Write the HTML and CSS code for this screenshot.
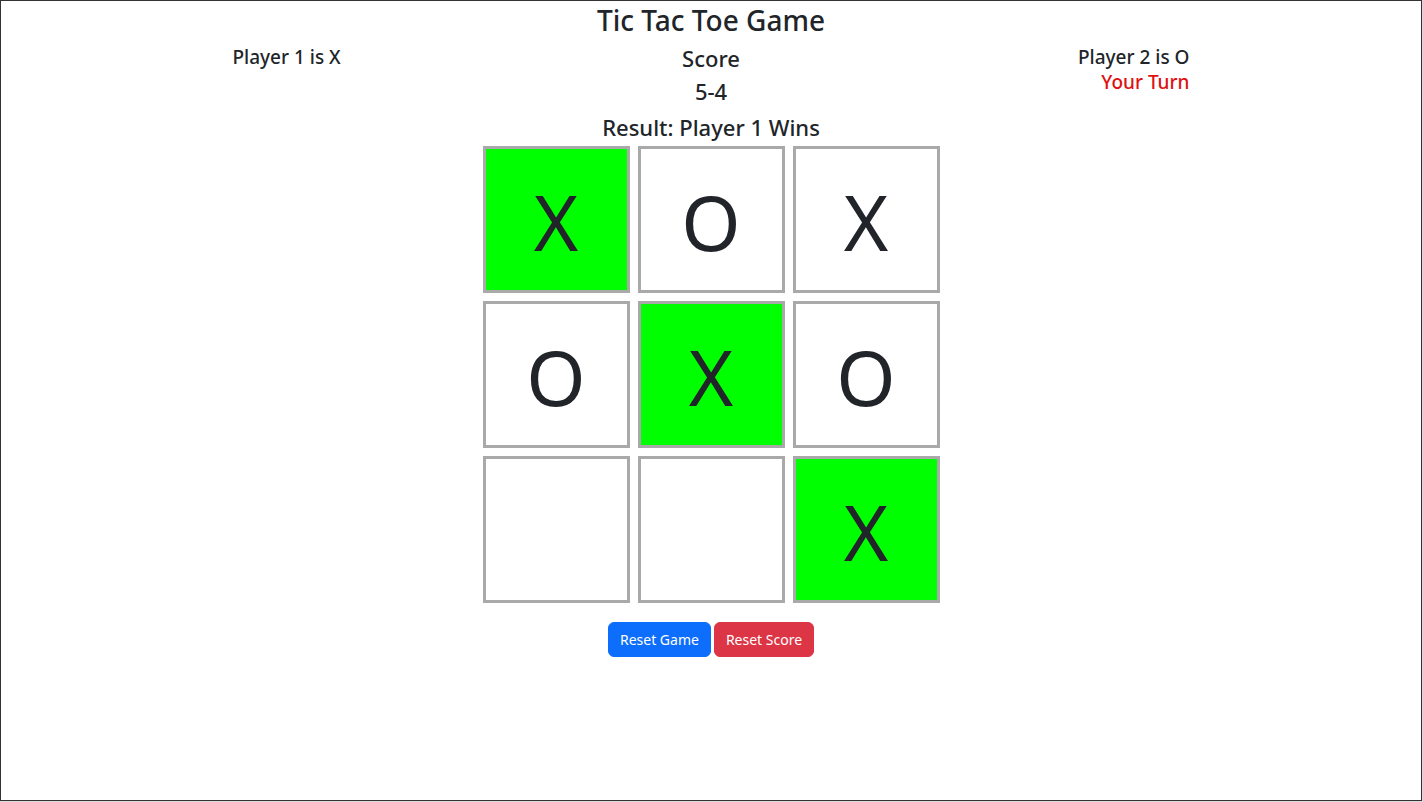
FILE: index.html
```html
<!DOCTYPE html>
<html lang="en">
<head>
<meta charset="utf-8">
<title>Tic Tac Toe Game</title>
<link rel="stylesheet" href="styles.css">
</head>
<body>
<div class="page">
  <h1 class="title">Tic Tac Toe Game</h1>
  <div class="info">
    <div class="player player-left">
      <h5 class="player-name">Player 1 is X</h5>
    </div>
    <div class="score">
      <h4 class="score-line">Score</h4>
      <h4 class="score-line tally">5-4</h4>
      <h4 class="score-line result">Result: Player 1 Wins</h4>
    </div>
    <div class="player player-right">
      <h5 class="player-name">Player 2 is O</h5>
      <h5 class="turn">Your Turn</h5>
    </div>
  </div>
  <div class="board">
    <div class="cell win">X</div>
    <div class="cell">O</div>
    <div class="cell">X</div>
    <div class="cell">O</div>
    <div class="cell win">X</div>
    <div class="cell">O</div>
    <div class="cell"></div>
    <div class="cell"></div>
    <div class="cell win">X</div>
  </div>
  <div class="actions">
    <button class="btn btn-primary">Reset Game</button>
    <button class="btn btn-danger">Reset Score</button>
  </div>
</div>
</body>
</html>
```
FILE: styles.css
```css
* { box-sizing: border-box; }
html, body {
  margin: 0;
  padding: 0;
  background: #d9d9d9;
}
body {
  font-family: "Noto Sans", "Open Sans", sans-serif;
  color: #212529;
}
.page {
  width: 1422px;
  height: 801px;
  border: 1px solid #333;
  background: #fff;
  display: flex;
  flex-direction: column;
  align-items: center;
}
.title {
  margin: 3px 0 0;
  font-size: 28px;
  font-weight: 500;
  line-height: 1.2;
  text-align: center;
}
.info {
  width: 957px;
  display: grid;
  grid-template-columns: 1fr auto 1fr;
}
.player-left { text-align: left; padding-top: 7px; }
.player-right { text-align: right; padding-top: 7px; }
.player-name, .turn {
  margin: 0;
  font-size: 19px;
  font-weight: 500;
  line-height: 25px;
}
.turn { color: #e01010; }
.score { text-align: center; padding-top: 6px; }
.score-line {
  margin: 0 0 5px;
  font-size: 22px;
  font-weight: 500;
  line-height: 28px;
}
.score-line.tally { margin-bottom: 8px; }
.score-line.result { margin-bottom: 0; }
.board {
  margin-top: 5px;
  display: grid;
  grid-template-columns: repeat(3, 147px);
  grid-auto-rows: 147px;
  gap: 8px;
}
.cell {
  border: 3px solid #a9a9a9;
  background: #fff;
  display: flex;
  align-items: center;
  justify-content: center;
  font-size: 76px;
  font-weight: 400;
  line-height: 1;
  padding-top: 6px;
}
.cell.win { background: #00ff00; }
.actions {
  margin-top: 19px;
  display: flex;
  gap: 3px;
}
.btn {
  font-family: inherit;
  font-size: 14px;
  line-height: 21px;
  padding: 6px 11px;
  border: 1px solid transparent;
  border-radius: 6px;
  color: #fff;
  cursor: pointer;
}
.btn-primary { background: #0d6efd; border-color: #0d6efd; }
.btn-danger { background: #dc3545; border-color: #dc3545; }
```
